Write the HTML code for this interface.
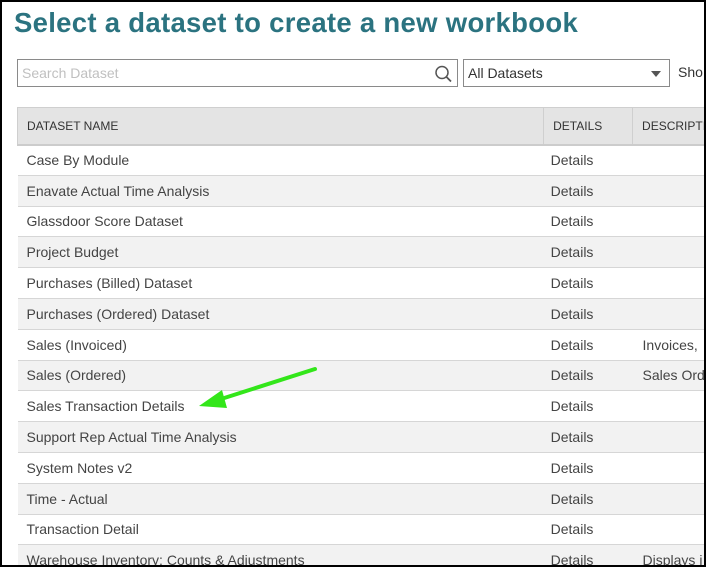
<!DOCTYPE html>
<html><head><style>
*{margin:0;padding:0;box-sizing:border-box}
html,body{width:706px;height:567px;overflow:hidden}
body{background:#fff;font-family:"Liberation Sans",sans-serif;position:relative}
.frame{position:absolute;left:0;top:0;width:706px;height:567px;border:2px solid #000;pointer-events:none;z-index:5}
h1{position:absolute;left:14px;top:7px;font-size:27.5px;font-weight:bold;color:#2b7380;letter-spacing:0.3px;white-space:nowrap}
.search{position:absolute;left:17px;top:59px;width:441px;height:28px;border:1px solid #8a8a8a;}
.search span{position:absolute;left:4px;top:5px;font-size:14px;color:#c0c0c0}
.sel{position:absolute;left:463px;top:59px;width:207px;height:28px;border:1px solid #8a8a8a}
.sel span{position:absolute;left:4px;top:5px;font-size:14px;color:#333}
.show{position:absolute;left:678px;top:64px;font-size:14px;color:#333}
table{position:absolute;left:17px;top:107px;border-collapse:collapse;width:700px}
th{background:#e4e4e4;height:37px;font-size:12px;font-weight:normal;color:#333;text-align:left;padding-left:9px;border:1px solid #cfcfcf;border-bottom:2px solid #ccc}
td{height:30.8px;font-size:14px;color:#444;padding-left:9px;border-bottom:1px solid #d6d6d6;white-space:nowrap;overflow:hidden}
tr:nth-child(odd) td{background:#f2f2f2}
td:nth-child(2){padding-left:7px}
td:nth-child(3){padding-left:10px}
</style></head><body>
<div class="frame"></div>
<h1>Select a dataset to create a new workbook</h1>
<div class="search"><span>Search Dataset</span>
<svg style="position:absolute;left:416px;top:5px" width="20" height="18" viewBox="0 0 20 18"><circle cx="8" cy="7.5" r="6" fill="none" stroke="#555" stroke-width="1.5"/><line x1="12.3" y1="11.8" x2="17" y2="16.5" stroke="#555" stroke-width="1.8"/></svg></div>
<div class="sel"><span>All Datasets</span>
<svg style="position:absolute;left:187px;top:11px" width="10" height="6"><polygon points="0,0 10,0 5,6" fill="#555"/></svg></div>
<div class="show">Sho</div>
<table>
<colgroup><col style="width:527px"><col style="width:89px"><col style="width:84px"></colgroup>
<tr><th>DATASET NAME</th><th>DETAILS</th><th>DESCRIPTI</th></tr>
<tr><td>Case By Module</td><td>Details</td><td></td></tr>
<tr><td>Enavate Actual Time Analysis</td><td>Details</td><td></td></tr>
<tr><td>Glassdoor Score Dataset</td><td>Details</td><td></td></tr>
<tr><td>Project Budget</td><td>Details</td><td></td></tr>
<tr><td>Purchases (Billed) Dataset</td><td>Details</td><td></td></tr>
<tr><td>Purchases (Ordered) Dataset</td><td>Details</td><td></td></tr>
<tr><td>Sales (Invoiced)</td><td>Details</td><td>Invoices,</td></tr>
<tr><td>Sales (Ordered)</td><td>Details</td><td>Sales Ord</td></tr>
<tr><td>Sales Transaction Details</td><td>Details</td><td></td></tr>
<tr><td>Support Rep Actual Time Analysis</td><td>Details</td><td></td></tr>
<tr><td>System Notes v2</td><td>Details</td><td></td></tr>
<tr><td>Time - Actual</td><td>Details</td><td></td></tr>
<tr><td>Transaction Detail</td><td>Details</td><td></td></tr>
<tr><td>Warehouse Inventory: Counts &amp; Adjustments</td><td>Details</td><td>Displays i</td></tr>
</table>
<svg style="position:absolute;left:0;top:0;z-index:4" width="706" height="567">
<line x1="315" y1="369" x2="218" y2="400" stroke="#33e61a" stroke-width="4" stroke-linecap="round"/>
<polygon points="199,406 222,390 227,408" fill="#33e61a"/>
</svg>
</body></html>
